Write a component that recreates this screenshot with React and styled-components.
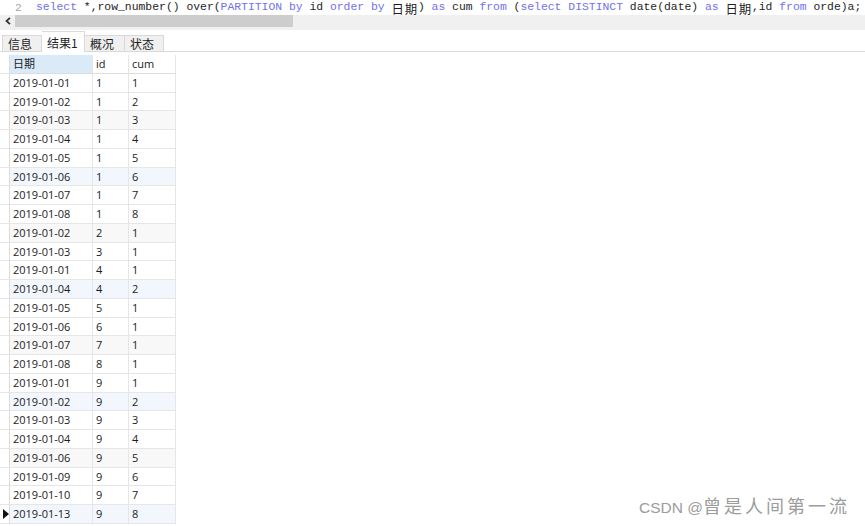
import React from 'react'
import styled, { createGlobalStyle } from 'styled-components'

const Global = createGlobalStyle`
  html, body { margin: 0; padding: 0; background: #fff; }
  body { width: 865px; height: 526px; overflow: hidden; }
`

const code = [
  ['select', 'k'], [' *,row_number() over(', 'n'], ['PARTITION', 'k'], [' ', 'n'],
  ['by', 'k'], [' id ', 'n'], ['order', 'k'], [' ', 'n'], ['by', 'k'], [' ', 'n'],
  ['日期', 'c'], [') ', 'n'], ['as', 'k'], [' cum ', 'n'], ['from', 'k'], [' (', 'n'],
  ['select', 'k'], [' ', 'n'], ['DISTINCT', 'k'], [' date(date) ', 'n'], ['as', 'k'],
  [' ', 'n'], ['日期', 'c'], [',id ', 'n'], ['from', 'k'], [' orde)a;', 'n'],
]

const rows = [
  ['2019-01-01', 1, 1], ['2019-01-02', 1, 2], ['2019-01-03', 1, 3], ['2019-01-04', 1, 4],
  ['2019-01-05', 1, 5], ['2019-01-06', 1, 6], ['2019-01-07', 1, 7], ['2019-01-08', 1, 8],
  ['2019-01-02', 2, 1], ['2019-01-03', 3, 1], ['2019-01-01', 4, 1], ['2019-01-04', 4, 2],
  ['2019-01-05', 5, 1], ['2019-01-06', 6, 1], ['2019-01-07', 7, 1], ['2019-01-08', 8, 1],
  ['2019-01-01', 9, 1], ['2019-01-02', 9, 2], ['2019-01-03', 9, 3], ['2019-01-04', 9, 4],
  ['2019-01-06', 9, 5], ['2019-01-09', 9, 6], ['2019-01-10', 9, 7], ['2019-01-13', 9, 8],
]

const tabs = [
  { label: '信息', w: 40 },
  { label: '结果1', w: 43, active: true },
  { label: '概况', w: 40 },
  { label: '状态', w: 39 },
]

const Page = styled.div`
  position: relative;
  width: 865px;
  height: 526px;
  overflow: hidden;
  background: #fff;
`

const CodeLine = styled.div`
  display: flex;
  height: 15px;
  align-items: center;
  white-space: pre;
  font-family: "Liberation Mono", "Noto Sans CJK SC", monospace;
  font-size: 11.4px;
  color: #222;
`

const LineNo = styled.span`
  width: 36px;
  padding-left: 15px;
  box-sizing: border-box;
  color: #a8a8a8;
`

const Tok = styled.span`
  color: ${p => (p.$kind === 'k' ? '#7171ee' : '#1e1e1e')};
  line-height: 15px;
`

const Cjk = styled.span`
  align-self: flex-start;
  height: 18px;
  font-family: "Noto Sans CJK SC", sans-serif;
  font-size: 12.4px;
  letter-spacing: 0.8px;
  line-height: 18px;
  color: #1e1e1e;
`

const ScrollBar = styled.div`
  display: flex;
  align-items: flex-start;
  height: 15px;
  background: #f0f0f0;
`

const Arrow = styled.div`
  width: 15px;
  height: 12px;
  display: flex;
  align-items: center;
  justify-content: center;
`

const Thumb = styled.div`
  width: 278px;
  height: 12px;
  background: #cdcdcd;
`

const TabBar = styled.div`
  display: flex;
  align-items: flex-end;
  height: 20px;
  margin-top: 1px;
  padding-left: 2px;
  border-bottom: 1px solid #d9d9d9;
`

const Tab = styled.div`
  width: ${p => p.$w}px;
  height: ${p => (p.$active ? 21 : 16)}px;
  margin-bottom: ${p => (p.$active ? -1 : 0)}px;
  box-sizing: border-box;
  border: 1px solid #d9d9d9;
  border-bottom: none;
  border-left: ${p => (p.$first ? '1px solid #d9d9d9' : 'none')};
  background: ${p => (p.$active ? '#fff' : '#f0f0f0')};
  padding-left: 5px;
  padding-top: ${p => (p.$active ? 3 : 0)}px;
  font-family: "Noto Sans CJK SC", sans-serif;
  font-size: 12px;
  line-height: 15px;
  color: #1e1e1e;
`

const Grid = styled.div`
  display: grid;
  grid-template-columns: 10px 83px 36px 47px;
  grid-auto-rows: 18.75px;
  width: 176px;
  margin-top: 3px;
  font-family: "Open Sans", "Noto Sans CJK SC", sans-serif;
  font-size: 11px;
  color: #1c1c1c;
`

const Cell = styled.div`
  box-sizing: border-box;
  border-right: 1px solid #e6e6e6;
  border-bottom: 1px solid #e6e6e6;
  padding-left: 3px;
  line-height: 18px;
  white-space: nowrap;
  background: ${p => p.$bg || '#fff'};
`

const HeadCell = styled(Cell)`
  background: ${p => (p.$selected ? '#d9eaf9' : '#fff')};
  border-bottom: 1px solid #dcdcdc;
`

const RowHead = styled.div`
  box-sizing: border-box;
  border-right: 1px solid #dcdcdc;
  border-bottom: 1px solid #e6e6e6;
  display: flex;
  align-items: center;
  justify-content: center;
  background: #fff;
`

const Marker = styled.div`
  width: 0;
  height: 0;
  margin-left: 2px;
  border-top: 5px solid transparent;
  border-bottom: 5px solid transparent;
  border-left: 6px solid #111;
`

const Watermark = styled.div`
  position: absolute;
  right: 15px;
  bottom: 8px;
  display: flex;
  align-items: baseline;
  color: #9c9c9c;
  text-shadow: 0 0 1px #fff;
  font-family: "Liberation Sans", Arial, sans-serif;
  font-size: 15.5px;
`

const Name = styled.span`
  font-family: "Noto Sans CJK SC", sans-serif;
  font-size: 18px;
  letter-spacing: 3px;
`

const rowBg = n => (n % 6 === 0 ? '#f2f7fd' : n % 6 === 3 ? '#f8f8f8' : '#fff')

export default function App() {
  return (
    <Page>
      <Global />
      <CodeLine>
        <LineNo>2</LineNo>
        {code.map(([t, k], i) =>
          k === 'c' ? <Cjk key={i}>{t}</Cjk> : <Tok key={i} $kind={k}>{t}</Tok>
        )}
      </CodeLine>
      <ScrollBar>
        <Arrow>
          <svg width="6" height="8" viewBox="0 0 6 8">
            <path d="M5 0.8 L1.5 4 L5 7.2" fill="none" stroke="#333" strokeWidth="1.8" />
          </svg>
        </Arrow>
        <Thumb />
      </ScrollBar>
      <TabBar>
        {tabs.map((t, i) => (
          <Tab key={t.label} $w={t.w} $active={t.active} $first={i === 0}>{t.label}</Tab>
        ))}
      </TabBar>
      <Grid>
        <RowHead />
        <HeadCell $selected>日期</HeadCell>
        <HeadCell>id</HeadCell>
        <HeadCell>cum</HeadCell>
        {rows.map((r, i) => {
          const bg = rowBg(i + 1)
          return (
            <React.Fragment key={i}>
              <RowHead>{i === rows.length - 1 && <Marker />}</RowHead>
              <Cell $bg={bg}>{r[0]}</Cell>
              <Cell $bg={bg}>{r[1]}</Cell>
              <Cell $bg={bg}>{r[2]}</Cell>
            </React.Fragment>
          )
        })}
      </Grid>
      <Watermark>
        CSDN&nbsp;@<Name>曾是人间第一流</Name>
      </Watermark>
    </Page>
  )
}
